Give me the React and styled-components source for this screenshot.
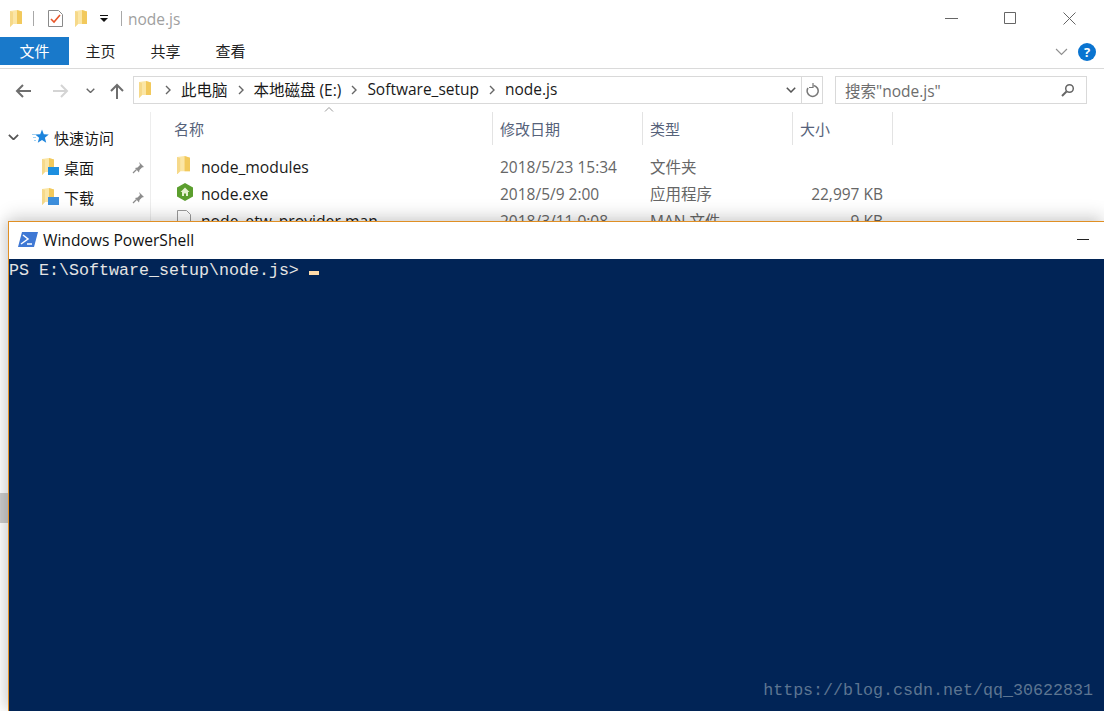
import React from 'react'
import styled, { createGlobalStyle } from 'styled-components'

const GlobalStyle = createGlobalStyle`
    html, body {
        margin: 0;
        padding: 0;
        background: #ffffff;
        overflow: hidden;
    }
    * {
        box-sizing: border-box;
    }
`

const UI = '"Open Sans", "Noto Sans CJK SC", sans-serif'
const MONO = '"Liberation Mono", "Noto Sans CJK SC", monospace'

const Folder = ({ size = 12 }) => (
    <svg width={size} height={size * 1.42} viewBox="0 0 12 17" preserveAspectRatio="none">
        <path d="M0 1 L7 0 L12 1.500 L12 14 L3 14 L0 17 Z" fill="#fbe6a6" />
        <path d="M7 0 L12 1.500 L12 14 L7 14 Z" fill="#f2c95c" />
        <path d="M0 1 L0 17 L3 14 L3 2 Z" fill="#f6d98a" />
    </svg>
)

const Arrow = ({ dir, color }) => {
    const paths = {
        left: 'M16 8H2M8 2L2 8l6 6',
        right: 'M0 8h14M8 2l6 6-6 6',
        up: 'M8 16V2M2 8l6-6 6 6',
    }
    return (
        <svg width="16" height="16" viewBox="0 0 16 16" fill="none" stroke={color} strokeWidth="2">
            <path d={paths[dir]} />
        </svg>
    )
}

const Chevron = ({ color = '#666', w = 9 }) => (
    <svg width={w} height={w * 0.62} viewBox="0 0 9 5.600" fill="none" stroke={color} strokeWidth={w > 11 ? 0.8 : 1.4}>
        <path d="M.7.700l3.800 3.800L8.300.700" />
    </svg>
)

const Crumb = () => (
    <svg width="6" height="10" viewBox="0 0 6 10" fill="none" stroke="#666" strokeWidth="1.4">
        <path d="M1 1l4 4-4 4" />
    </svg>
)

const Pin = () => (
    <svg width="13" height="13" viewBox="0 0 13 13">
        <path d="M7 1l5 5-2 .5-2.500 2.500-.5 2.500L3 7l2.500-.5L8 4z" fill="#8c8c8c" />
        <path d="M4.500 8.500L1 12" stroke="#8c8c8c" strokeWidth="1.3" />
    </svg>
)

const App = () => {
    return (
        <>
            <GlobalStyle />
            <Desktop>
                <Explorer>
                    <TitleBar>
                        <Folder />
                        <TitleSlot $ml={11}><TitleSep /></TitleSlot>
                        <TitleSlot $ml={14}>
                            <svg width="15" height="17" viewBox="0 0 15 17">
                                <path d="M.5.500h10l4 4v12H.5z" fill="#fff" stroke="#8a8a8a" />
                                <path d="M3 9l3 3 6-7" fill="none" stroke="#e8562a" strokeWidth="1.6" />
                            </svg>
                        </TitleSlot>
                        <TitleSlot $ml={12}><Folder /></TitleSlot>
                        <TitleSlot $ml={13}>
                            <svg width="8" height="8" viewBox="0 0 8 8">
                                <path d="M0 0h8v1H0zM0 3h8L4 7z" fill="#111" />
                            </svg>
                        </TitleSlot>
                        <TitleSlot $ml={13}><TitleSep /></TitleSlot>
                        <TitleSlot $ml={6}><TitleText>node.js</TitleText></TitleSlot>
                        <WinButtons>
                            <svg width="13" height="13" viewBox="0 0 13 13" stroke="#666">
                                <path d="M0 6.500h13" />
                            </svg>
                            <svg width="13" height="13" viewBox="0 0 13 13" fill="none" stroke="#666">
                                <path d="M.5.500h11v11H.5z" />
                            </svg>
                            <svg width="13" height="13" viewBox="0 0 13 13" stroke="#666">
                                <path d="M.5.500l12 12M12.500.500l-12 12" />
                            </svg>
                        </WinButtons>
                    </TitleBar>
                    <TabRow>
                        <FileTab>文件</FileTab>
                        <Tab>主页</Tab>
                        <Tab>共享</Tab>
                        <Tab>查看</Tab>
                        <TabRight>
                            <Chevron color="#909090" w={13} />
                            <HelpDot>?</HelpDot>
                        </TabRight>
                    </TabRow>
                    <AddressRow>
                        <NavGroup>
                            <Arrow dir="left" color="#6e6e6e" />
                            <NavGap $w={22}><Arrow dir="right" color="#d4d4d4" /></NavGap>
                            <NavGap $w={17}><Chevron /></NavGap>
                            <NavGap $w={14}><Arrow dir="up" color="#6e6e6e" /></NavGap>
                        </NavGroup>
                        <AddressBox>
                            <Folder />
                            <CrumbFirst><Crumb /></CrumbFirst>
                            <CrumbText>此电脑</CrumbText>
                            <Crumb />
                            <CrumbText>本地磁盘 (E:)</CrumbText>
                            <Crumb />
                            <CrumbText>Software_setup</CrumbText>
                            <Crumb />
                            <CrumbText>node.js</CrumbText>
                            <AddressEnd>
                                <Chevron color="#555" w={10} />
                                <RefreshCell>
                                    <svg width="14" height="15" viewBox="0 0 14 15" fill="none" stroke="#777" strokeWidth="1.5">
                                        <path d="M8.500 2.500A5.500 5.500 0 1 1 3 5" />
                                        <path d="M8 0v4.500h-4" strokeWidth="1.2" />
                                    </svg>
                                </RefreshCell>
                            </AddressEnd>
                        </AddressBox>
                        <SearchBox>
                            <span>搜索"node.js"</span>
                            <svg width="14" height="14" viewBox="0 0 14 14" fill="none" stroke="#666">
                                <circle cx="8.500" cy="5.500" r="3.800" strokeWidth="1.5" />
                                <path d="M5.500 8.500L1 13" strokeWidth="2" />
                            </svg>
                        </SearchBox>
                    </AddressRow>
                    <Body>
                        <Sidebar>
                            <QuickAccess>
                                <Chevron color="#555" w={11} />
                                <svg width="17" height="16" viewBox="0 0 17 15">
                                    <path d="M10 0l1.800 4.800 5 .3-3.900 3.200 1.300 5-4.200-2.800-4.200 2.800 1.300-5L3.200 5.100l5-.3z" fill="#1c84dc" />
                                    <path d="M0 5h4M1 8h3M2 11h2" stroke="#9fd0f2" strokeWidth="1" />
                                </svg>
                                <span>快速访问</span>
                            </QuickAccess>
                            <SideItem>
                                <SideIcon>
                                    <Folder />
                                    <SideBadge $color="#1d8fe0" />
                                </SideIcon>
                                <span>桌面</span>
                                <PinSlot><Pin /></PinSlot>
                            </SideItem>
                            <SideItem>
                                <SideIcon>
                                    <Folder />
                                    <SideBadge $color="#3d8fdd" />
                                </SideIcon>
                                <span>下载</span>
                                <PinSlot><Pin /></PinSlot>
                            </SideItem>
                        </Sidebar>
                        <Files>
                            <SortCaret>
                                <svg width="10" height="5" viewBox="0 0 10 5" fill="none" stroke="#999">
                                    <path d="M1 4.500l4-4 4 4" />
                                </svg>
                            </SortCaret>
                            <HeaderRow>
                                <NameCol>名称</NameCol>
                                <DateCol>修改日期</DateCol>
                                <TypeCol>类型</TypeCol>
                                <SizeCol>大小</SizeCol>
                            </HeaderRow>
                            <FileRow>
                                <FileName>
                                    <FileIcon><Folder size={13} /></FileIcon>
                                    node_modules
                                </FileName>
                                <FileMeta $w={150}>2018/5/23 15:34</FileMeta>
                                <FileMeta $w={150}>文件夹</FileMeta>
                            </FileRow>
                            <FileRow>
                                <FileName>
                                    <FileIcon>
                                        <svg width="16" height="18" viewBox="0 0 16 18">
                                            <path d="M8 0l8 4.500v9L8 18l-8-4.500v-9z" fill="#5b9e2e" />
                                            <path d="M3.500 9L8 4.500 12.500 9H11v4H9v-2.500H7V13H5V9z" fill="#e6f2d0" />
                                        </svg>
                                    </FileIcon>
                                    node.exe
                                </FileName>
                                <FileMeta $w={150}>2018/5/9 2:00</FileMeta>
                                <FileMeta $w={150}>应用程序</FileMeta>
                                <FileSize>22,997 KB</FileSize>
                            </FileRow>
                            <FileRow>
                                <FileName>
                                    <FileIcon>
                                        <svg width="14" height="18" viewBox="0 0 14 18">
                                            <path d="M.5.500h9l4 4v13H.5z" fill="#fff" stroke="#9a9a9a" />
                                        </svg>
                                    </FileIcon>
                                    node_etw_provider.man
                                </FileName>
                                <FileMeta $w={150}>2018/3/11 0:08</FileMeta>
                                <FileMeta $w={150}>MAN 文件</FileMeta>
                                <FileSize>9 KB</FileSize>
                            </FileRow>
                        </Files>
                    </Body>
                </Explorer>
                <ScrollThumb />
                <PowerShell>
                    <PsTitle>
                        <svg width="20" height="15" viewBox="0 0 20 15">
                            <path d="M4 0h16l-4 15H0z" fill="#3f78d4" />
                            <path d="M5 3l5 4-7 5" fill="none" stroke="#fff" strokeWidth="1.5" />
                            <path d="M9 12h5" stroke="#fff" strokeWidth="1.5" />
                        </svg>
                        <PsTitleText>Windows PowerShell</PsTitleText>
                        <PsMinimize />
                    </PsTitle>
                    <Console>
                        <Prompt>PS E:\Software_setup\node.js&gt; <Cursor /></Prompt>
                    </Console>
                    <Watermark>https://blog.csdn.net/qq_30622831</Watermark>
                </PowerShell>
            </Desktop>
        </>
    )
}

const Desktop = styled.div`
    position: relative;
    width: 1104px;
    height: 711px;
    overflow: hidden;
    background: #ffffff;
    font-family: ${UI};
`

const Explorer = styled.div`
    width: 1104px;
    height: 711px;
    display: flex;
    flex-direction: column;
    background: #ffffff;
`

const TitleBar = styled.div`
    height: 37px;
    display: flex;
    align-items: center;
    padding-left: 10px;
`

const TitleSlot = styled.div`
    display: flex;
    margin-left: ${(props) => props.$ml}px;
`

const TitleSep = styled.div`
    width: 1px;
    height: 15px;
    background: #a8a8a8;
`

const TitleText = styled.div`
    font-size: 15.5px;
    color: #a0a0a0;
`

const WinButtons = styled.div`
    margin-left: auto;
    display: flex;
    gap: 46px;
    padding-right: 28px;
    margin-top: -1px;
`

const TabRow = styled.div`
    height: 32px;
    display: flex;
    align-items: flex-start;
    border-bottom: 1px solid #dadada;
`

const FileTab = styled.div`
    width: 69px;
    height: 28px;
    background: #1979ca;
    color: #ffffff;
    font-size: 15px;
    line-height: 28px;
    text-align: center;
`

const Tab = styled.div`
    width: 65px;
    height: 28px;
    color: #222222;
    font-size: 15px;
    line-height: 28px;
    text-align: center;
    position: relative;
    left: -1px;
`

const TabRight = styled.div`
    margin-left: auto;
    display: flex;
    align-items: center;
    gap: 10px;
    height: 28px;
    padding-right: 8px;
    padding-top: 2px;
`

const HelpDot = styled.div`
    width: 18px;
    height: 18px;
    border-radius: 50%;
    background: #0a74d0;
    color: #ffffff;
    font-size: 13px;
    font-weight: 700;
    line-height: 18px;
    text-align: center;
`

const AddressRow = styled.div`
    height: 35px;
    display: flex;
    align-items: flex-end;
    padding: 0 17px 0 0;
`

const NavGroup = styled.div`
    width: 133px;
    height: 27px;
    display: flex;
    align-items: center;
    padding-left: 15px;
`

const NavGap = styled.div`
    margin-left: ${(props) => props.$w}px;
    display: flex;
`

const AddressBox = styled.div`
    width: 690px;
    height: 28px;
    border: 1px solid #d9d9d9;
    display: flex;
    align-items: center;
    padding-left: 5px;
    gap: 10px;
`

const CrumbFirst = styled.div`
    display: flex;
    margin-left: 4px;
`

const CrumbText = styled.span`
    font-size: 15.5px;
    color: #1a1a1a;
    white-space: nowrap;
    margin-top: -2px;
`

const AddressEnd = styled.div`
    margin-left: auto;
    height: 100%;
    display: flex;
    align-items: center;
    gap: 5px;
`

const RefreshCell = styled.div`
    width: 21px;
    height: 100%;
    border-left: 1px solid #d9d9d9;
    display: flex;
    align-items: center;
    justify-content: center;
`

const SearchBox = styled.div`
    width: 252px;
    height: 28px;
    margin-left: 12px;
    border: 1px solid #d9d9d9;
    display: flex;
    align-items: center;
    justify-content: space-between;
    padding: 0 11px 0 9px;
    font-size: 15.5px;
    color: #6d6d6d;
`

const Body = styled.div`
    flex: 1;
    display: flex;
    padding-top: 8px;
`

const Sidebar = styled.div`
    width: 151px;
    height: 200px;
    border-right: 1px solid #ededed;
    padding-top: 10px;
    font-size: 15px;
    color: #1a1a1a;
`

const QuickAccess = styled.div`
    height: 30px;
    display: flex;
    align-items: center;
    padding-left: 8px;
    gap: 13px;

    span {
        margin-left: -8px;
    }
`

const SideItem = styled.div`
    height: 30px;
    display: flex;
    align-items: center;
    padding-left: 42px;

    span {
        margin-left: 10px;
    }
`

const SideIcon = styled.div`
    position: relative;
    width: 12px;
    display: flex;
`

const SideBadge = styled.div`
    position: absolute;
    right: -5px;
    bottom: 1px;
    width: 11px;
    height: 8px;
    background: ${(props) => props.$color};
`

const PinSlot = styled.div`
    margin-left: auto;
    padding-right: 5px;
    display: flex;
`

const Files = styled.div`
    position: relative;
    flex: 1;
`

const SortCaret = styled.div`
    position: absolute;
    left: 173px;
    top: -5px;
    display: flex;
`

const HeaderRow = styled.div`
    height: 33px;
    display: flex;
    font-size: 15px;
    color: #56627a;
    line-height: 35px;
    margin-bottom: 8px;
`

const NameCol = styled.div`
    width: 342px;
    padding-left: 23px;
    border-right: 1px solid #e3e3e3;
`

const DateCol = styled.div`
    width: 150px;
    padding-left: 7px;
    border-right: 1px solid #e3e3e3;
`

const TypeCol = styled(DateCol)``

const SizeCol = styled.div`
    width: 100px;
    padding-left: 7px;
    border-right: 1px solid #e3e3e3;
`

const FileRow = styled.div`
    height: 27px;
    display: flex;
    align-items: center;
    font-size: 15.7px;
`

const FileName = styled.div`
    width: 342px;
    padding-left: 26px;
    display: flex;
    align-items: center;
    color: #1a1a1a;
    white-space: nowrap;
`

const FileIcon = styled.div`
    width: 24px;
    display: flex;
    margin-top: -3px;
`

const FileMeta = styled.div`
    width: ${(props) => props.$w}px;
    padding-left: 7px;
    color: #666666;
    font-size: 15.5px;
    white-space: nowrap;
`

const FileSize = styled.div`
    width: 90px;
    text-align: right;
    color: #666666;
    font-size: 15.5px;
    white-space: nowrap;
`

const ScrollThumb = styled.div`
    position: absolute;
    left: 0;
    top: 493px;
    width: 8px;
    height: 30px;
    background: #cdcdcd;
`

const PowerShell = styled.div`
    position: absolute;
    left: 8px;
    top: 221px;
    width: 1096px;
    height: 490px;
    display: flex;
    flex-direction: column;
    border: 1px solid #e08f24;
    border-right: 0;
    border-bottom: 0;
    box-shadow: 0 -6px 16px rgba(0, 0, 0, 0.14), -6px 0 10px rgba(0, 0, 0, 0.08);
`

const PsTitle = styled.div`
    height: 37px;
    flex-shrink: 0;
    display: flex;
    align-items: center;
    background: #ffffff;
    padding: 0 0 2px 9px;
`

const PsTitleText = styled.div`
    margin-left: 5px;
    font-family: "Open Sans", sans-serif;
    font-size: 15.6px;
    color: #111111;
`

const PsMinimize = styled.div`
    margin-left: auto;
    margin-right: 15px;
    width: 12px;
    height: 1px;
    background: #222222;
`

const Console = styled.div`
    position: relative;
    flex: 1;
    background: #012456;
    padding-top: 1px;
`

const Prompt = styled.div`
    font-family: ${MONO};
    font-size: 16.67px;
    line-height: 22px;
    color: #e4e4e4;
    white-space: pre;
`

const Cursor = styled.span`
    display: inline-block;
    width: 10px;
    height: 4px;
    background: #fedba9;
`

const Watermark = styled.div`
    position: absolute;
    right: 11px;
    bottom: 10px;
    font-family: ${MONO};
    font-size: 16.67px;
    line-height: 20px;
    color: #5d7591;
`

export default App
